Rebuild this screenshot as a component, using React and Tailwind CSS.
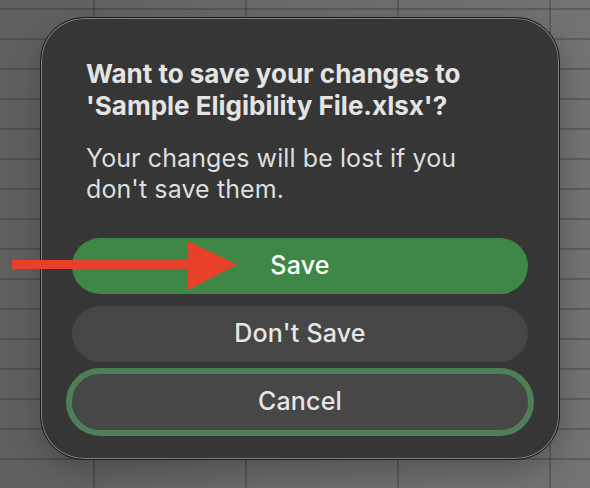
export default function App() {
  return (
    <div className="relative w-[590px] h-[488px] overflow-hidden bg-[#666] font-['Inter','Liberation_Sans',sans-serif]">
      {/* spreadsheet backdrop */}
      <div className="absolute inset-0 bg-[linear-gradient(90deg,#5f5f5f,#6c6c6c_50%,#737373)]" />
      <div className="absolute inset-0 bg-[linear-gradient(rgba(0,0,0,0.18)_2px,transparent_2px),linear-gradient(90deg,rgba(0,0,0,0.18)_2px,transparent_2px)] bg-[length:152px_30px] bg-[position:93px_8px]" />

      <div className="relative pt-[17px] pl-[40px]">
        <div className="w-[520px] h-[443px] rounded-[44px] bg-[#363636] border border-[#1c1c1c] shadow-[inset_0_0_0_1px_#828282,0_10px_30px_rgba(0,0,0,0.25)] px-[31px] pt-[40px]">
          <div className="px-[14px]">
            <h1 className="text-[26px] leading-[32px] font-bold text-[#e4e4e4]">
              Want to save your changes to 'Sample Eligibility File.xlsx'?
            </h1>
            <p className="mt-[21px] text-[25px] leading-[31px] text-[#dedede] tracking-[0.1px]">
              Your changes will be lost if you don't save them.
            </p>
          </div>

          <div className="mt-[33px] flex flex-col gap-3">
            <button className="h-[56px] rounded-full bg-[#3f8746] text-white text-[25px] font-medium tracking-[0.2px]">
              Save
            </button>
            <button className="h-[56px] rounded-full bg-[#464646] text-[#e6e6e6] text-[25px] font-medium tracking-[0.2px]">
              Don't Save
            </button>
            <button className="h-[56px] rounded-full bg-[#474747] text-[#e6e6e6] text-[25px] font-medium tracking-[0.2px] outline-[6px] outline-solid outline-[#4e7f58]">
              Cancel
            </button>
          </div>
        </div>
      </div>

      {/* red callout arrow */}
      <svg className="absolute left-0 top-[236px]" width="240" height="60" viewBox="0 236 240 60">
        <rect x="12" y="260" width="178" height="9" fill="#e8412a" />
        <polygon points="188,241 237,264.5 188,290" fill="#e8412a" />
      </svg>
    </div>
  );
}
